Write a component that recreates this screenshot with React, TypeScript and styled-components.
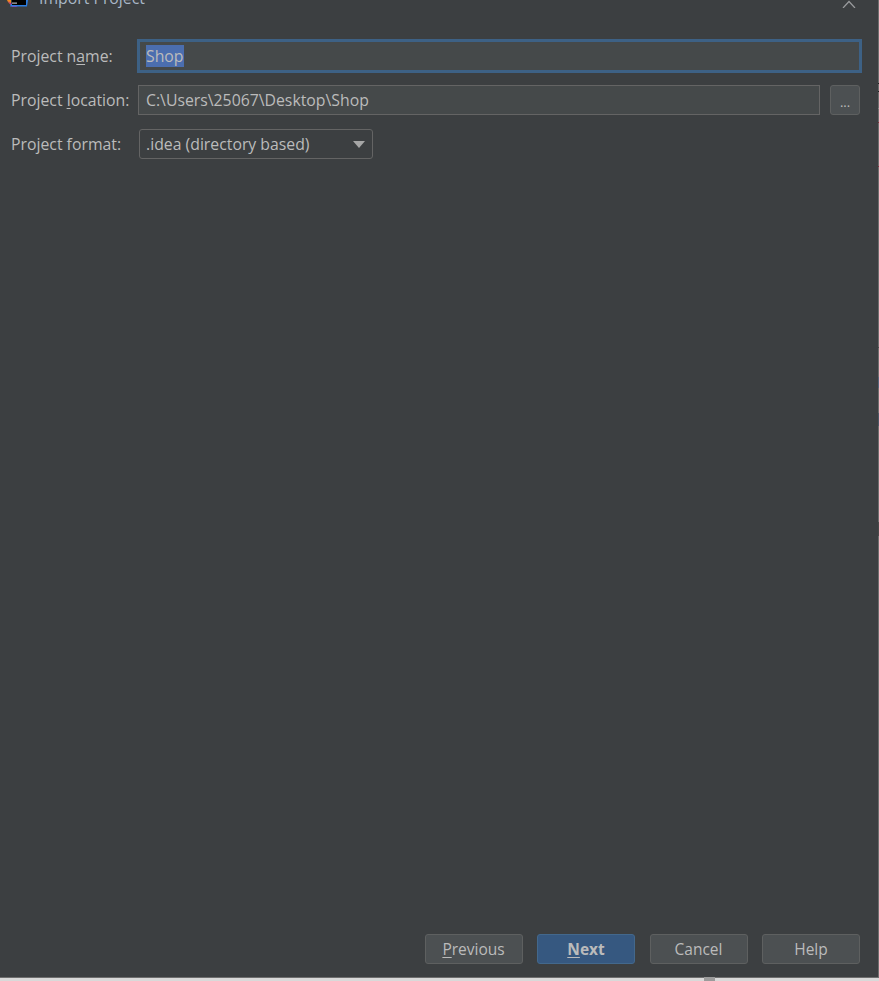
import styled, { createGlobalStyle } from "styled-components";

const edgeTicks = [
  { top: 83, height: 1, color: "#1e1e1e" },
  { top: 91, height: 1, color: "#1e1e1e" },
  { top: 108, height: 1, color: "#8a8a8a" },
  { top: 122, height: 1, color: "#7a2f3a" },
  { top: 166, height: 1, color: "#7a2f3a" },
  { top: 347, height: 1, color: "#4a4a4a" },
  { top: 377, height: 11, color: "#56657a" },
  { top: 413, height: 13, color: "#4d5866" },
  { top: 522, height: 14, color: "#4a4a4a" },
];

const GlobalStyle = createGlobalStyle`
  html, body {
    margin: 0;
    padding: 0;
    background: #d9d9d9;
  }
  body {
    font-family: "Open Sans", "Noto Sans", sans-serif;
  }
`;

const ScrollThumb = styled.div`
  position: absolute;
  left: 704px;
  top: 977px;
  width: 11px;
  height: 4px;
  background: #9b9b9b;
`;

const EdgeTick = styled.div<{ $top: number; $height: number; $color: string }>`
  position: absolute;
  left: 878px;
  top: ${(p) => p.$top}px;
  width: 1px;
  height: ${(p) => p.$height}px;
  background: ${(p) => p.$color};
`;

const Page = styled.div`
  position: relative;
  width: 879px;
  height: 981px;
  overflow: hidden;
`;

const Dialog = styled.div`
  display: flex;
  flex-direction: column;
  box-sizing: border-box;
  width: 879px;
  height: 978px;
  background: #3c3f41;
  border-right: 1px solid #6e6e6e;
  border-bottom: 1px solid #6e6e6e;
  color: #bbbbbb;
  font-size: 15.8px;
`;

const TitleBar = styled.div`
  display: flex;
  align-items: flex-end;
  flex: none;
  height: 8px;
  overflow: hidden;
  padding: 0 22px 0 7px;
`;

const TitleIcon = styled.svg`
  flex: none;
  align-self: flex-start;
  width: 21px;
  height: 8px;
`;

const TitleText = styled.div`
  flex: 1;
  margin-left: 11px;
  line-height: 20px;
  height: 20px;
  font-size: 15.8px;
  color: #a9b7c6;
`;

const CloseIcon = styled.svg`
  flex: none;
  width: 14px;
  height: 8px;
`;

const Form = styled.div`
  display: grid;
  grid-template-columns: 127px 1fr 40px;
  grid-auto-rows: 30px;
  row-gap: 14px;
  align-items: center;
  flex: 1;
  align-content: start;
  padding: 33px 18px 0 11px;
`;

const Label = styled.label`
  white-space: nowrap;
  color: #bbbbbb;
`;

const Mnemonic = styled.span`
  text-decoration: underline;
  text-underline-offset: 2px;
`;

const Field = styled.div<{ $focused?: boolean }>`
  display: flex;
  align-items: center;
  box-sizing: border-box;
  grid-column: ${(p) => (p.$focused ? "2 / 4" : "2")};
  height: 30px;
  margin-left: ${(p) => (p.$focused ? "1px" : "0")};
  padding: 0 0 0 ${(p) => (p.$focused ? "6px" : "7px")};
  background: #45494a;
  border: 1px solid ${(p) => (p.$focused ? "#3d6185" : "#646464")};
  box-shadow: ${(p) => (p.$focused ? "0 0 0 2px #3d6185" : "none")};
  white-space: nowrap;
`;

const Selected = styled.span`
  background: #4b6eaf;
  color: #bbbbbb;
`;

const BrowseButton = styled.button`
  justify-self: end;
  box-sizing: border-box;
  width: 30px;
  height: 30px;
  padding: 4px 0 0;
  background: #4c5052;
  border: 1px solid #5e6060;
  border-radius: 3px;
  color: #bbbbbb;
  font-family: inherit;
  font-size: 13px;
`;

const Combo = styled.div`
  display: flex;
  align-items: center;
  justify-content: space-between;
  box-sizing: border-box;
  width: 234px;
  height: 30px;
  margin-left: 1px;
  padding: 0 7px 0 6px;
  background: #3c3f41;
  border: 1px solid #646464;
  border-radius: 3px;
  white-space: nowrap;
`;

const ComboArrow = styled.svg`
  flex: none;
  width: 12px;
  height: 7px;
`;

const Footer = styled.div`
  display: flex;
  justify-content: flex-end;
  gap: 14.5px;
  flex: none;
  padding: 0 18px 13px 0;
`;

const DialogButton = styled.button<{ $primary?: boolean }>`
  box-sizing: border-box;
  width: 98px;
  height: 30px;
  padding: 0;
  background: ${(p) => (p.$primary ? "#365880" : "#4c5052")};
  border: 1px solid ${(p) => (p.$primary ? "#43688c" : "#5e6060")};
  border-radius: 3px;
  color: #bbbbbb;
  font-family: inherit;
  font-size: 15.5px;
  font-weight: ${(p) => (p.$primary ? 700 : 400)};
`;

export default function App() {
  return (
    <Page>
      <GlobalStyle />
      <Dialog>
        <TitleBar>
          <TitleIcon viewBox="0 0 21 8">
            <path d="M0 0 H4 V5 L1 2 Z" fill="#f28a1e" />
            <path d="M1 1 L5 7 H11 L5 4 Z" fill="#b5279c" />
            <path d="M3 6.5 H20 L21 0 H19 V4 H4 Z" fill="#2b7de0" />
            <rect x="5" y="0" width="14" height="5" fill="#000" />
            <rect x="5" y="2.6" width="5" height="1" fill="#ddd" />
          </TitleIcon>
          <TitleText>Import Project</TitleText>
          <CloseIcon viewBox="0 0 14 8">
            <path d="M1 8 L7 1.5 L13 8" fill="none" stroke="#9a9c9e" strokeWidth="1.2" />
          </CloseIcon>
        </TitleBar>
        <Form>
          <Label>
            Project n<Mnemonic>a</Mnemonic>me:
          </Label>
          <Field $focused>
            <Selected>Shop</Selected>
          </Field>
          <Label>
            Project <Mnemonic>l</Mnemonic>ocation:
          </Label>
          <Field>C:\Users\25067\Desktop\Shop</Field>
          <BrowseButton>...</BrowseButton>
          <Label>Project format:</Label>
          <Combo>
            .idea (directory based)
            <ComboArrow viewBox="0 0 12 7">
              <path d="M0 0 H12 L6 7 Z" fill="#a6a6a6" />
            </ComboArrow>
          </Combo>
        </Form>
        <Footer>
          <DialogButton>
            <Mnemonic>P</Mnemonic>revious
          </DialogButton>
          <DialogButton $primary>
            <Mnemonic>N</Mnemonic>ext
          </DialogButton>
          <DialogButton>Cancel</DialogButton>
          <DialogButton>Help</DialogButton>
        </Footer>
      </Dialog>
      {edgeTicks.map((t) => (
        <EdgeTick key={t.top} $top={t.top} $height={t.height} $color={t.color} />
      ))}
      <ScrollThumb />
    </Page>
  );
}
